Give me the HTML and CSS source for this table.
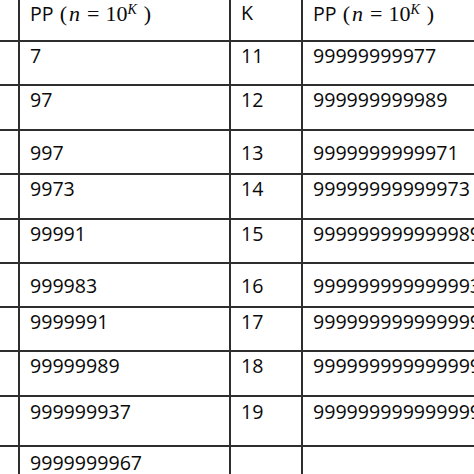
FILE: index.html
```html
<!DOCTYPE html>
<html lang="en">
<head>
<meta charset="utf-8">
<title>Largest primes below 10^K</title>
<link rel="stylesheet" href="styles.css">
</head>
<body>
<div class="sheet">
  <div class="cell head"></div>
  <div class="cell head">PP <span class="math">(<i class="n">n</i><span class="eq">=</span>10<sup><i>K</i></sup>)</span></div>
  <div class="cell head k">K</div>
  <div class="cell head">PP <span class="math">(<i class="n">n</i><span class="eq">=</span>10<sup><i>K</i></sup>)</span></div>

  <div class="cell r1"></div><div class="cell r1">7</div><div class="cell r1">11</div><div class="cell r1">99999999977</div>
  <div class="cell r2"></div><div class="cell r2">97</div><div class="cell r2">12</div><div class="cell r2">999999999989</div>
  <div class="cell r3 low"></div><div class="cell r3 low">997</div><div class="cell r3 low">13</div><div class="cell r3 low">9999999999971</div>
  <div class="cell r4"></div><div class="cell r4">9973</div><div class="cell r4">14</div><div class="cell r4">99999999999973</div>
  <div class="cell r5"></div><div class="cell r5">99991</div><div class="cell r5">15</div><div class="cell r5">999999999999989</div>
  <div class="cell r6 low"></div><div class="cell r6 low">999983</div><div class="cell r6 low">16</div><div class="cell r6 low">9999999999999937</div>
  <div class="cell r7"></div><div class="cell r7">9999991</div><div class="cell r7">17</div><div class="cell r7">99999999999999997</div>
  <div class="cell r8"></div><div class="cell r8">99999989</div><div class="cell r8">18</div><div class="cell r8">999999999999999989</div>
  <div class="cell r9"></div><div class="cell r9">999999937</div><div class="cell r9">19</div><div class="cell r9">9999999999999999961</div>
  <div class="cell r10"></div><div class="cell r10">9999999967</div><div class="cell r10"></div><div class="cell r10"></div>
</div>
</body>
</html>
```

FILE: styles.css
```css
html, body {
  margin: 0;
  padding: 0;
  background: #ffffff;
  overflow: hidden;
  width: 474px;
  height: 474px;
}

.sheet {
  display: grid;
  grid-template-columns: 72px 211px 72px 240px;
  grid-template-rows: 44px 44px 45px 44px 45px 44px 44px 44px 45px 50px 50px;
  margin-left: -52px;
  margin-top: -4px;
  width: 595px;
  border-top: 2px solid #2e2e2e;
  font-family: "Open Sans", "Liberation Sans", sans-serif;
  font-size: 19.6px;
  line-height: 24px;
  color: #0a0a0a;
}

.cell {
  box-sizing: border-box;
  border-right: 2px solid #2e2e2e;
  border-bottom: 2px solid #2e2e2e;
  padding: 2px 0 0 10px;
  white-space: nowrap;
  overflow: hidden;
}

.head {
  padding-top: 4px;
}

.head.k {
  padding-top: 3px;
}

.low {
  padding-top: 10px;
}

.r9 {
  padding-top: 3px;
}

.r10 {
  padding-top: 4px;
}

.math {
  font-family: "Liberation Serif", "DejaVu Serif", serif;
  font-size: 22px;
  margin-left: 1px;
}

.math i {
  font-style: italic;
}

.n {
  margin-left: 2px;
}

.eq {
  margin: 0 6px 0 7px;
}

.math sup {
  font-size: 14px;
  line-height: 0;
  vertical-align: 7px;
  margin-right: 7px;
}
```
